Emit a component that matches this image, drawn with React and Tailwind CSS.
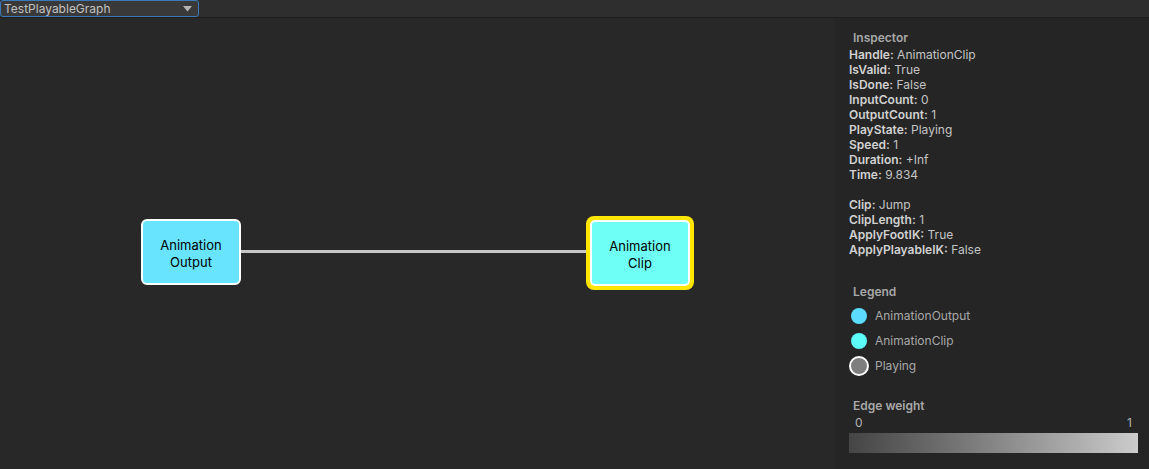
import React from 'react';

const font = { fontFamily: 'Inter, "Noto Sans", "Liberation Sans", sans-serif' };

const info = [
  ['Handle', 'AnimationClip'],
  ['IsValid', 'True'],
  ['IsDone', 'False'],
  ['InputCount', '0'],
  ['OutputCount', '1'],
  ['PlayState', 'Playing'],
  ['Speed', '1'],
  ['Duration', '+Inf'],
  ['Time', '9.834'],
];

const clipInfo = [
  ['Clip', 'Jump'],
  ['ClipLength', '1'],
  ['ApplyFootIK', 'True'],
  ['ApplyPlayableIK', 'False'],
];

function Row({ label, value }) {
  return (
    <p className="h-[15px] leading-[15px] text-[12px] text-[#c4c4c4]">
      <span className="font-semibold text-[#d2d2d2]">{label}:</span> {value}
    </p>
  );
}

export default function App() {
  return (
    <div className="w-[1149px] h-[469px] flex flex-col bg-[#282828] overflow-hidden" style={font}>
      {/* toolbar */}
      <div className="h-[18px] shrink-0 bg-[#2e2e2e] border-b border-[#1e1e1e] flex items-start">
        <div className="w-[199px] h-[17px] bg-[#393939] border border-[#3c79b8] rounded-[3px] flex items-center justify-between pl-[3px] pr-[6px]">
          <span className="text-[12px] leading-none text-[#c2c2c2]">TestPlayableGraph</span>
          <svg width="9" height="6" viewBox="0 0 9 6">
            <path d="M0 0 H9 L4.5 5.5 Z" fill="#b4b4b4" />
          </svg>
        </div>
      </div>

      <div className="flex flex-1 min-h-0">
        {/* graph canvas */}
        <div className="relative w-[834px] bg-[#282828]">
          <div className="absolute left-[241px] top-[232px] w-[345px] h-[3px] bg-[#c8c8c8]" />
          <div className="absolute left-[141px] top-[201px] w-[100px] h-[66px] rounded-[6px] border-2 border-white bg-[#68e4ff] flex items-center justify-center pt-[3px] text-center text-[13px] leading-[17px] text-black">
            Animation<br />Output
          </div>
          <div className="absolute left-[586px] top-[198px] w-[108px] h-[74px] rounded-[8px] bg-[#ffe600] p-[4px]">
            <div className="w-full h-full rounded-[5px] border-2 border-white bg-[#6efff6] flex items-center justify-center pt-[3px] text-center text-[13px] leading-[17px] text-black">
              Animation<br />Clip
            </div>
          </div>
        </div>

        {/* inspector panel */}
        <div className="flex-1 bg-[#252525] pl-[15px] pr-[11px] pt-[12px]">
          <p className="pl-[4px] h-[15px] leading-[15px] text-[12px] font-semibold text-[#a8a8a8]">Inspector</p>
          <div className="mt-[2px]">
            {info.map(([l, v]) => (
              <Row key={l} label={l} value={v} />
            ))}
          </div>
          <div className="mt-[15px]">
            {clipInfo.map(([l, v]) => (
              <Row key={l} label={l} value={v} />
            ))}
          </div>

          <p className="mt-[27px] pl-[4px] h-[15px] leading-[15px] text-[12px] font-semibold text-[#a8a8a8]">Legend</p>
          <div className="mt-[9px] flex flex-col gap-[9px]">
            <div className="flex items-center h-[16px]">
              <span className="w-[16px] h-[16px] ml-[2px] rounded-full bg-[#5cdcff]" />
              <span className="ml-[8px] text-[12px] text-[#a8a8a8]">AnimationOutput</span>
            </div>
            <div className="flex items-center h-[16px]">
              <span className="w-[16px] h-[16px] ml-[2px] rounded-full bg-[#5cfcf8]" />
              <span className="ml-[8px] text-[12px] text-[#a8a8a8]">AnimationClip</span>
            </div>
            <div className="flex items-center h-[16px]">
              <span className="w-[20px] h-[20px] rounded-full border-[2px] border-white bg-[#7e7e7e]" />
              <span className="ml-[6px] text-[12px] text-[#a8a8a8]">Playing</span>
            </div>
          </div>

          <p className="mt-[24px] pl-[4px] h-[15px] leading-[15px] text-[12px] font-semibold text-[#a8a8a8]">Edge weight</p>
          <div className="mt-[3px] flex justify-between px-[6px] h-[14px] leading-[14px] text-[12px] text-[#b4b4b4]">
            <span>0</span>
            <span>1</span>
          </div>
          <div className="mt-[3px] h-[20px] w-[289px] bg-gradient-to-r from-[#454545] to-[#cccccc]" />
        </div>
      </div>
    </div>
  );
}
